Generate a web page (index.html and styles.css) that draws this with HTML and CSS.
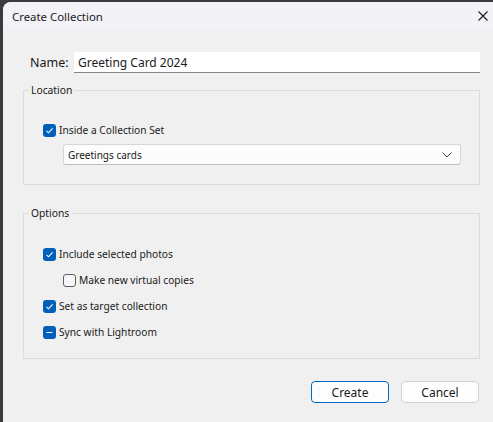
FILE: index.html
```html
<!DOCTYPE html>
<html lang="en">
<head>
  <meta charset="UTF-8">
  <meta name="viewport" content="width=device-width, initial-scale=1.0">
  <title>Create Collection</title>
  <link rel="stylesheet" href="styles.css">
</head>
<body>
  <div class="window">
    <!-- Title bar -->
    <div class="titlebar">
      <span class="title">Create Collection</span>
      <svg class="close" width="10" height="10" viewBox="0 0 10 10">
        <path d="M0.5 0.5 L9.5 9.5 M9.5 0.5 L0.5 9.5" stroke="#1a1a1a" stroke-width="1.1" fill="none"/>
      </svg>
    </div>

    <div class="content">
      <div class="name-row">
        <label for="name">Name:</label>
        <input type="text" id="name" class="name-input" value="Greeting Card 2024">
      </div>

      <!-- Location -->
      <fieldset class="group location">
        <legend>Location</legend>
        <div class="check-row">
          <span class="box checked">
            <svg width="13" height="13" viewBox="0 0 13 13"><path d="M3.5 6.8 L5.5 8.8 L9.6 4.4" stroke="#fff" stroke-width="1.1" fill="none"/></svg>
          </span>
          <span>Inside a Collection Set</span>
        </div>
        <div class="select">
          <span>Greetings cards</span>
          <svg width="10" height="6" viewBox="0 0 10 6"><path d="M0.5 0.5 L5 5 L9.5 0.5" stroke="#444" stroke-width="1" fill="none"/></svg>
        </div>
      </fieldset>

      <!-- Options -->
      <fieldset class="group options">
        <legend>Options</legend>
        <div class="check-row">
          <span class="box checked">
            <svg width="13" height="13" viewBox="0 0 13 13"><path d="M3.5 6.8 L5.5 8.8 L9.6 4.4" stroke="#fff" stroke-width="1.1" fill="none"/></svg>
          </span>
          <span>Include selected photos</span>
        </div>
        <div class="check-row indent">
          <span class="box"></span>
          <span>Make new virtual copies</span>
        </div>
        <div class="check-row">
          <span class="box checked">
            <svg width="13" height="13" viewBox="0 0 13 13"><path d="M3.5 6.8 L5.5 8.8 L9.6 4.4" stroke="#fff" stroke-width="1.1" fill="none"/></svg>
          </span>
          <span>Set as target collection</span>
        </div>
        <div class="check-row">
          <span class="box checked">
            <svg width="13" height="13" viewBox="0 0 13 13"><path d="M3.5 6.5 L9.5 6.5" stroke="#fff" stroke-width="1.2" fill="none"/></svg>
          </span>
          <span>Sync with Lightroom</span>
        </div>
      </fieldset>

      <div class="buttons">
        <button class="btn default">Create</button>
        <button class="btn">Cancel</button>
      </div>
    </div>
  </div>
</body>
</html>
```

FILE: styles.css
```css
* {
  box-sizing: border-box;
  margin: 0;
  padding: 0;
}
body {
  background: #3b3b3b;
  font-family: "Noto Sans", "Open Sans", Arial, sans-serif;
  font-size: 10.2px;
  color: #1a1a1a;
  overflow: hidden;
}
.window {
  margin: 2px 0 0 3px;
  height: 430px;
  background: #f0f0f0;
  border-top-left-radius: 8px;
  overflow: hidden;
}
.titlebar {
  height: 28px;
  background: #f3f2f7;
  display: flex;
  align-items: center;
  justify-content: space-between;
  padding: 0 5px 0 9px;
}
.title {
  font-size: 11.4px;
}
.content {
  padding: 22px 13px 0 20px;
}
.name-row {
  display: flex;
  align-items: center;
  padding-left: 7px;
}
.name-row label {
  font-size: 12.5px;
  width: 44px;
}
.name-input {
  flex: 1;
  height: 21px;
  border: none;
  border-bottom: 1px solid #868686;
  background: #fff;
  font-family: inherit;
  font-size: 12px;
  padding: 0 4px;
  color: #1a1a1a;
  outline: none;
}
.group {
  border: 1px solid #dcdcdc;
  min-width: 0;
  padding: 0 18px 19px 19px;
}
.group legend {
  font-size: 10.3px;
  line-height: 16px;
  padding: 0 2px;
  margin-left: -14px;
}
.location {
  margin-top: 9px;
  padding-top: 24px;
}
.options {
  margin-top: 20px;
  padding-top: 25px;
  padding-bottom: 18px;
  display: flex;
  flex-direction: column;
}
.options .check-row + .check-row {
  margin-top: 10px;
}
.check-row {
  display: flex;
  align-items: center;
  height: 16px;
  gap: 3px;
}
.check-row.indent {
  padding-left: 20px;
}
.box {
  width: 13px;
  height: 13px;
  border-radius: 3px;
  border: 1px solid #5f5f5f;
  background: #f7f7f7;
  display: flex;
}
.box.checked {
  border: none;
  background: #005fb8;
}
.select {
  margin: 6px 0 0 20px;
  height: 21px;
  background: #fcfcfc;
  border: 1px solid #d6d6d6;
  border-bottom-color: #bdbdbd;
  border-radius: 3px;
  display: flex;
  align-items: center;
  justify-content: space-between;
  padding: 0 8px 0 4px;
  font-size: 10px;
}
.buttons {
  display: flex;
  justify-content: flex-end;
  gap: 12px;
  margin-top: 22px;
  padding-right: 1px;
}
.btn {
  width: 78px;
  height: 22px;
  background: #fdfdfd;
  border: 1px solid #d0d0d0;
  border-radius: 4px;
  font-family: inherit;
  font-size: 12px;
  color: #1a1a1a;
}
.btn.default {
  border-color: #0067c0;
}
```
